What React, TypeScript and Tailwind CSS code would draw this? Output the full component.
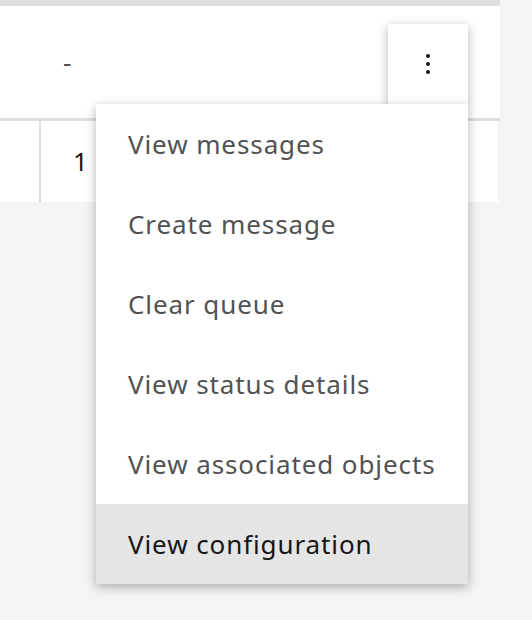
import React from "react";

const items = [
	"View messages",
	"Create message",
	"Clear queue",
	"View status details",
	"View associated objects",
	"View configuration",
];

export default function App() {
	const active = 5;

	return (
		<div
			className="relative h-[620px] w-[532px] overflow-hidden bg-[#f4f4f4]"
			style={{ fontFamily: '"Noto Sans", sans-serif' }}
		>
			<div className="w-[500px]">
				<div className="h-[6px] bg-[#e0e0e0]" />
				<div className="flex h-[112px] items-center bg-white">
					<div className="w-[41px]" />
					<span className="pl-[22px] text-[26px] text-[#525252]">-</span>
				</div>
				<div className="h-[3px] bg-[#e0e0e0]" />
				<div className="flex h-[81px] w-[498px] bg-white">
					<div className="w-[41px] border-r-2 border-[#e0e0e0]" />
					<div className="flex items-center pl-[32px] text-[26px] text-[#161616]">1</div>
				</div>
			</div>

			{/* overflow trigger */}
			<button className="absolute left-[388px] top-[24px] z-10 flex h-[80px] w-[80px] flex-col items-center justify-center gap-[4px] bg-white shadow-[0_3px_10px_rgba(0,0,0,0.3)]">
				<span className="h-[4px] w-[4px] rounded-full bg-[#161616]" />
				<span className="h-[4px] w-[4px] rounded-full bg-[#161616]" />
				<span className="h-[4px] w-[4px] rounded-full bg-[#161616]" />
			</button>

			{/* menu */}
			<ul className="absolute left-[96px] top-[104px] z-20 w-[372px] bg-white shadow-[0_3px_10px_rgba(0,0,0,0.3)]">
				{items.map((label, i) => (
					<li
						key={label}
						className={
							i === active
								? "flex h-[80px] items-center bg-[#e5e5e5] pl-[32px] text-[26px] tracking-[0.9px] text-[#161616]"
								: "flex h-[80px] items-center pl-[32px] text-[26px] tracking-[0.9px] text-[#525252]"
						}
					>
						{label}
					</li>
				))}
			</ul>
		</div>
	);
}
